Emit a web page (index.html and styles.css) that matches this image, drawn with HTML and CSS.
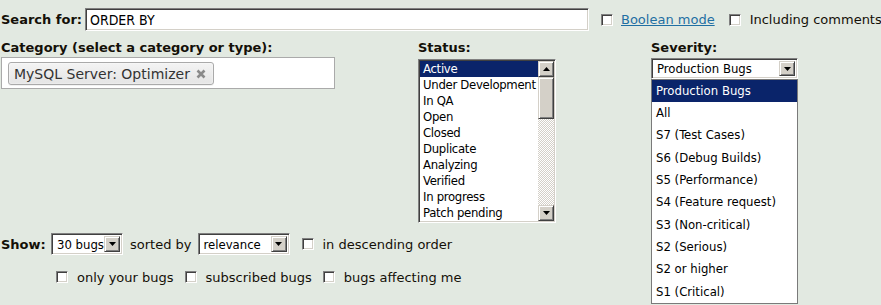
FILE: index.html
```html
<!DOCTYPE html>
<html>
<head>
<meta charset="utf-8">
<link rel="stylesheet" href="styles.css">
</head>
<body>
<div class="page">
  <div class="row search-row">
    <label class="lbl search-label">Search for:</label>
    <input class="textbox" type="text" value="ORDER BY">
    <span class="cb cb-bool"></span><a class="link" href="#">Boolean mode</a>
    <span class="cb cb-comments"></span><span class="cb-text">Including comments</span>
  </div>

  <div class="filters">
    <div class="col col-cat">
      <div class="lbl">Category (select a category or type):</div>
      <div class="tagbox">
        <span class="tag">MySQL Server: Optimizer
          <svg class="tag-x" width="10" height="10" viewBox="0 0 10 10"><path d="M1.5 1.5 L8.5 8.5 M8.5 1.5 L1.5 8.5" stroke="#8a8a8a" stroke-width="2.6" stroke-linecap="butt"/></svg>
        </span>
      </div>
    </div>

    <div class="col col-status">
      <div class="lbl">Status:</div>
      <div class="listbox">
        <ul class="items">
          <li class="sel">Active</li>
          <li>Under Development</li>
          <li>In QA</li>
          <li>Open</li>
          <li>Closed</li>
          <li>Duplicate</li>
          <li>Analyzing</li>
          <li>Verified</li>
          <li>In progress</li>
          <li>Patch pending</li>
        </ul>
        <div class="vscroll">
          <span class="btn3d sbtn"><svg width="7" height="4" viewBox="0 0 7 4"><path d="M3.5 0 L7 4 L0 4 Z" fill="#000"/></svg></span>
          <span class="btn3d thumb"></span>
          <span class="track"></span>
          <span class="btn3d sbtn"><svg width="7" height="4" viewBox="0 0 7 4"><path d="M0 0 L7 0 L3.5 4 Z" fill="#000"/></svg></span>
        </div>
      </div>
    </div>

    <div class="col col-sev">
      <div class="lbl">Severity:</div>
      <div class="sev-wrap">
        <div class="select sel-sev"><span class="select-val">Production Bugs</span><span class="btn3d dd-btn"><svg width="7" height="4" viewBox="0 0 7 4"><path d="M0 0 L7 0 L3.5 4 Z" fill="#000"/></svg></span></div>
        <ul class="dropdown">
          <li class="sel">Production Bugs</li>
          <li>All</li>
          <li>S7 (Test Cases)</li>
          <li>S6 (Debug Builds)</li>
          <li>S5 (Performance)</li>
          <li>S4 (Feature request)</li>
          <li>S3 (Non-critical)</li>
          <li>S2 (Serious)</li>
          <li>S2 or higher</li>
          <li>S1 (Critical)</li>
        </ul>
      </div>
    </div>
  </div>

  <div class="row show-row">
    <span class="lbl show-label">Show:</span>
    <div class="select sel-count"><span class="select-val">30 bugs</span><span class="btn3d dd-btn"><svg width="7" height="4" viewBox="0 0 7 4"><path d="M0 0 L7 0 L3.5 4 Z" fill="#000"/></svg></span></div>
    <span class="sorted">sorted by</span>
    <div class="select sel-order"><span class="select-val">relevance</span><span class="btn3d dd-btn"><svg width="7" height="4" viewBox="0 0 7 4"><path d="M0 0 L7 0 L3.5 4 Z" fill="#000"/></svg></span></div>
    <span class="cb cb-desc"></span><span class="cb-text">in descending order</span>
  </div>

  <div class="row opts-row">
    <span class="cb"></span><span class="cb-text">only your bugs</span>
    <span class="cb cb-next"></span><span class="cb-text">subscribed bugs</span>
    <span class="cb cb-next"></span><span class="cb-text">bugs affecting me</span>
  </div>
</div>
</body>
</html>
```

FILE: styles.css
```css
html, body {
  margin: 0;
  padding: 0;
  background: #e2e9e1;
}
body {
  font-family: "DejaVu Sans", Verdana, sans-serif;
  font-size: 13px;
  color: #141008;
}
.page {
  box-sizing: border-box;
  height: 305px;
  overflow: hidden;
  padding: 8px 0 0 1px;
}
.row {
  display: flex;
  align-items: center;
  white-space: nowrap;
}
.row > * {
  flex: none;
}
.lbl {
  font-weight: bold;
  line-height: 15px;
  white-space: nowrap;
}

/* search row */
.search-row {
  height: 23px;
}
.search-label {
  width: 84px;
}
.textbox {
  box-sizing: border-box;
  width: 504px;
  height: 23px;
  margin: 0;
  padding: 1px 4px 0;
  border: 1px solid;
  border-color: #808080 #ffffff #ffffff #808080;
  box-shadow: inset 1px 1px #404040, inset -1px -1px #d4d0c8;
  background: #fff;
  font-family: "DejaVu Sans Condensed", "DejaVu Sans", sans-serif;
  font-stretch: condensed;
  font-size: 14px;
  color: #000;
  outline: none;
}
.cb {
  box-sizing: border-box;
  display: inline-block;
  width: 12px;
  height: 12px;
  background: #fff;
  border: 1px solid;
  border-color: #808080 #ffffff #ffffff #808080;
  box-shadow: inset 1px 1px #404040, inset -1px -1px #d4d0c8;
}
.cb-bool {
  margin-left: 12px;
}
.link {
  margin-left: 8px;
  color: #1f6fa3;
  text-decoration: underline;
  white-space: nowrap;
}
.cb-comments {
  margin-left: 14px;
}
.cb-text {
  margin-left: 9px;
  white-space: nowrap;
}

/* filters */
.filters {
  display: flex;
  margin-top: 9px;
}
.col-cat {
  width: 417px;
  flex: none;
}
.col-status {
  width: 233px;
  flex: none;
}
.col-sev {
  flex: none;
  width: 150px;
}
.tagbox {
  box-sizing: border-box;
  width: 334px;
  height: 32px;
  margin-top: 2px;
  background: #fff;
  border: 1px solid #aaaaaa;
  padding: 4px 0 0 6px;
}
.tag {
  display: inline-flex;
  align-items: center;
  box-sizing: border-box;
  height: 23px;
  padding: 0 7px 0 5px;
  border: 1px solid #aaaaaa;
  border-radius: 3px;
  background: linear-gradient(#f4f4f4, #e4e4e4);
  box-shadow: 0 0 2px #fff inset, 0 1px 0 rgba(0,0,0,0.05);
  color: #333;
  font-size: 14px;
  white-space: nowrap;
}
.tag-x {
  margin-left: 6px;
}

.listbox {
  box-sizing: border-box;
  display: flex;
  width: 138px;
  height: 164px;
  margin-top: 4px;
  background: #fff;
  border: 1px solid;
  border-color: #808080 #ffffff #ffffff #808080;
  box-shadow: inset 1px 1px #404040, inset -1px -1px #d4d0c8;
  padding: 1px;
}
.items {
  list-style: none;
  margin: 0;
  padding: 0;
  flex: 1;
  font-family: "DejaVu Sans Condensed", "DejaVu Sans", sans-serif;
  font-stretch: condensed;
  font-size: 13px;
  letter-spacing: -0.3px;
  line-height: 16px;
  color: #000;
  overflow: hidden;
}
.items li {
  padding-left: 3px;
  height: 16px;
  white-space: nowrap;
}
.items li.sel,
.dropdown li.sel {
  background: #0a246a;
  color: #fff;
}
.vscroll {
  display: flex;
  flex-direction: column;
  width: 16px;
  flex: none;
}
.btn3d {
  box-sizing: border-box;
  display: flex;
  align-items: center;
  justify-content: center;
  background: #d4d0c8;
  border: 1px solid;
  border-color: #d4d0c8 #404040 #404040 #d4d0c8;
  box-shadow: inset 1px 1px #ffffff, inset -1px -1px #808080;
}
.sbtn {
  width: 16px;
  height: 16px;
  flex: none;
}
.thumb {
  width: 16px;
  height: 42px;
  flex: none;
}
.track {
  flex: 1;
  background: repeating-conic-gradient(#ffffff 0 25%, #d4d0c8 0 50%) 0 0 / 2px 2px;
}

/* selects */
.select {
  box-sizing: border-box;
  display: flex;
  align-items: center;
  background: #fff;
  border: 1px solid;
  border-color: #808080 #ffffff #ffffff #808080;
  box-shadow: inset 1px 1px #404040, inset -1px -1px #d4d0c8;
  padding: 2px;
  font-family: "DejaVu Sans Condensed", "DejaVu Sans", sans-serif;
  font-stretch: condensed;
  font-size: 13px;
  color: #000;
}
.select-val {
  flex: 1;
  padding-left: 3px;
  white-space: nowrap;
  overflow: hidden;
}
.dd-btn {
  width: 16px;
  height: 100%;
  flex: none;
}
.sev-wrap {
  position: relative;
  margin-top: 3px;
  width: 147px;
}
.sel-sev {
  width: 147px;
  height: 21px;
}
.dropdown {
  position: absolute;
  top: 21px;
  left: 0;
  z-index: 5;
  box-sizing: border-box;
  width: 147px;
  margin: 0;
  padding: 0;
  list-style: none;
  background: #fff;
  border: 1px solid #7a7a7a;
  font-family: "DejaVu Sans Condensed", "DejaVu Sans", sans-serif;
  font-stretch: condensed;
  font-size: 13px;
  color: #000;
}
.dropdown li {
  height: 22px;
  line-height: 22px;
  padding-left: 4px;
  white-space: nowrap;
}
.dropdown li:nth-child(3n) {
  height: 23px;
}

/* show row */
.show-row {
  margin-top: 10px;
  height: 22px;
}
.show-label {
  width: 50px;
}
.sel-count {
  width: 72px;
  height: 22px;
}
.sorted {
  margin-left: 7px;
}
.sel-order {
  margin-left: 6px;
  width: 92px;
  height: 22px;
}
.cb-desc {
  margin-left: 12px;
}

/* options row */
.opts-row {
  margin-top: 14px;
  padding-left: 55px;
  height: 16px;
}
.cb-next {
  margin-left: 11px;
}
```
